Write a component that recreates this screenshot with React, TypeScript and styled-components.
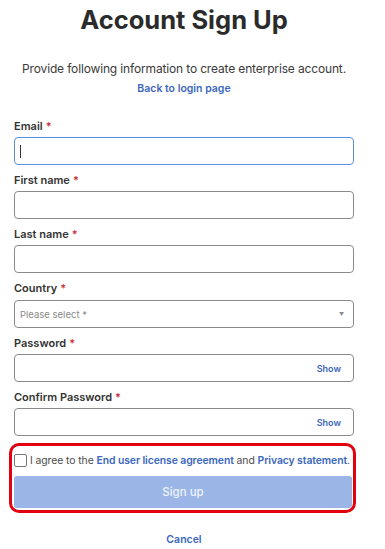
import styled, { createGlobalStyle } from 'styled-components';

const GlobalStyle = createGlobalStyle`
  html, body {
    margin: 0;
    padding: 0;
    background: #ffffff;
  }
  body {
    font-family: Inter, 'Noto Sans', sans-serif;
    color: #333333;
  }
`;

const Page = styled.div`
  width: 368px;
  padding: 0 14px;
  box-sizing: border-box;
  display: flex;
  flex-direction: column;
`;

const Title = styled.h1`
  margin: 0;
  font-size: 25.5px;
  line-height: 40px;
  font-weight: 700;
  color: #2b2b2b;
  text-align: center;
`;

const Lead = styled.p`
  margin: 20px -10px 0;
  font-size: 12px;
  line-height: 18px;
  letter-spacing: -0.15px;
  color: #3a3a3a;
  text-align: center;
  white-space: nowrap;
`;

const CenterLink = styled.a<{ $gap?: number }>`
  display: block;
  margin-top: ${(p) => p.$gap ?? 0}px;
  font-size: 10.5px;
  line-height: 16px;
  font-weight: 600;
  color: #3b67bd;
  text-align: center;
  text-decoration: none;
`;

const Form = styled.form`
  margin-top: 21px;
  display: flex;
  flex-direction: column;
  gap: 7px;
`;

const Field = styled.div<{ $pad?: number }>`
  display: flex;
  flex-direction: column;
  gap: ${(p) => 3 + (p.$pad ?? 0)}px;
`;

const Label = styled.label`
  font-size: 11px;
  line-height: 16px;
  font-weight: 600;
  color: #333333;
`;

const Req = styled.span`
  color: #c8323c;
  margin-left: 3px;
`;

const Box = styled.div<{ $focused?: boolean }>`
  position: relative;
  height: 28px;
  box-sizing: border-box;
  border: ${(p) => (p.$focused ? '1.5px solid #5b8fe3' : '1px solid #8a8a8a')};
  border-radius: 4px;
  display: flex;
  align-items: center;
  padding: 0 12px 0 5px;
  background: #fff;
`;

const Caret = styled.span`
  width: 1px;
  height: 13px;
  background: #333;
`;

const Placeholder = styled.span`
  flex: 1;
  font-size: 9.5px;
  color: #8a8a8a;
`;

const Arrow = styled.span`
  font-size: 5px;
  color: #888;
  margin-right: -3px;
`;

const Spacer = styled.span`
  flex: 1;
`;

const Show = styled.span`
  font-size: 9px;
  font-weight: 600;
  color: #3b67bd;
`;

const Agree = styled.div`
  margin: 0 -2px 0 -5px;
  border: 3px solid #e3000f;
  border-radius: 10px;
  padding: 6px 1px 2px 2px;
  display: flex;
  flex-direction: column;
  gap: 8px;
`;

const CheckRow = styled.div`
  display: flex;
  align-items: center;
  gap: 3px;
  height: 16px;
  font-size: 10.4px;
  letter-spacing: -0.08px;
  color: #4a4a4a;
  white-space: nowrap;
`;

const CheckBox = styled.span`
  width: 11px;
  height: 11px;
  border: 1px solid #767676;
  border-radius: 2px;
  flex: none;
`;

const Strong = styled.a`
  font-weight: 600;
  color: #3b67bd;
  text-decoration: none;
`;

const SignUp = styled.button`
  height: 32px;
  border: none;
  border-radius: 3px;
  background: #9ab5e6;
  color: #eef3fb;
  font-family: inherit;
  font-size: 11.5px;
  font-weight: 500;
`;

export default function App() {
  return (
    <>
      <GlobalStyle />
      <Page>
        <Title>Account Sign Up</Title>
        <Lead>Provide following information to create enterprise account.</Lead>
        <CenterLink $gap={3}>Back to login page</CenterLink>
        <Form>
          <Field>
            <Label>Email<Req>*</Req></Label>
            <Box $focused>
              <Caret />
            </Box>
          </Field>
          <Field>
            <Label>First name<Req>*</Req></Label>
            <Box />
          </Field>
          <Field>
            <Label>Last name<Req>*</Req></Label>
            <Box />
          </Field>
          <Field $pad={1}>
            <Label>Country<Req>*</Req></Label>
            <Box>
              <Placeholder>Please select *</Placeholder>
              <Arrow>▼</Arrow>
            </Box>
          </Field>
          <Field>
            <Label>Password<Req>*</Req></Label>
            <Box>
              <Spacer />
              <Show>Show</Show>
            </Box>
          </Field>
          <Field>
            <Label>Confirm Password<Req>*</Req></Label>
            <Box>
              <Spacer />
              <Show>Show</Show>
            </Box>
          </Field>
          <Agree>
            <CheckRow>
              <CheckBox />
              <span>
                I agree to the <Strong>End user license agreement</Strong> and{' '}
                <Strong>Privacy statement</Strong>.
              </span>
            </CheckRow>
            <SignUp type="button">Sign up</SignUp>
          </Agree>
        </Form>
        <CenterLink $gap={19}>Cancel</CenterLink>
      </Page>
    </>
  );
}
